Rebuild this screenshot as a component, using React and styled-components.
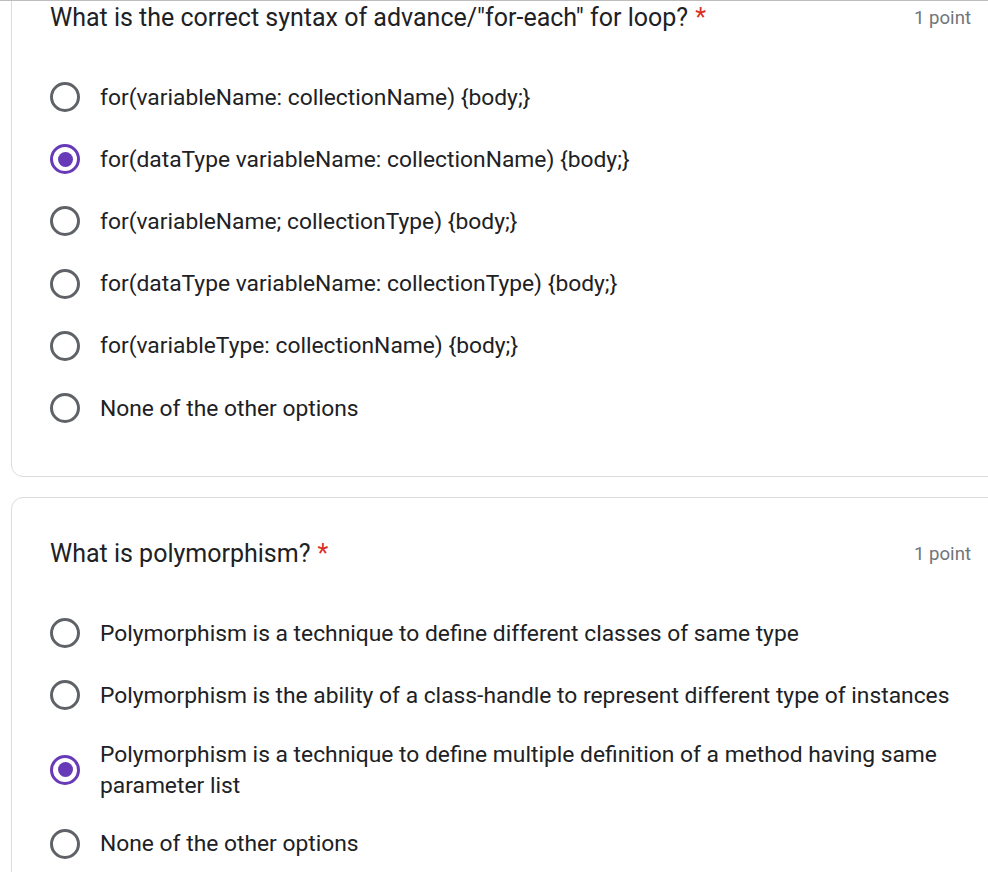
import React from 'react';
import styled, { createGlobalStyle } from 'styled-components';

const GlobalStyle = createGlobalStyle`
  html, body {
    margin: 0;
    padding: 0;
    background: #fff;
    overflow: hidden;
  }
  body {
    font-family: Roboto, "Liberation Sans", Arial, sans-serif;
    color: #202124;
  }
`;

const Page = styled.div`
  height: 872px;
  overflow: hidden;
  border-top: 1px solid #bdbdbd;
  box-sizing: border-box;
  padding-left: 11px;
`;

const Stack = styled.div`
  display: flex;
  flex-direction: column;
  gap: 20px;
  width: 999px;
  margin-top: -40px;
`;

const Card = styled.div`
  background: #fff;
  border: 1px solid #dadce0;
  border-radius: 12px;
  padding: 38px 38px 37px 38px;
`;

const Header = styled.div`
  display: flex;
  justify-content: space-between;
  align-items: center;
  margin-bottom: 30px;
`;

const Title = styled.div`
  font-size: 25px;
  line-height: 36px;
  font-weight: 400;
  color: #202124;
`;

const Required = styled.span`
  color: #d93025;
  margin-left: 7px;
`;

const Points = styled.div`
  font-size: 18.6px;
  line-height: 36px;
  color: #70757a;
  white-space: nowrap;
`;

const Options = styled.div`
  display: flex;
  flex-direction: column;
`;

const Option = styled.label`
  display: flex;
  align-items: center;
  gap: 20px;
  padding: 12.1px 0;
  cursor: pointer;
`;

const Radio = styled.span`
  flex: none;
  width: 30px;
  height: 30px;
  margin: 4px 0;
  box-sizing: border-box;
  border-radius: 50%;
  border: 3px solid ${(p) => (p.checked ? '#673ab7' : '#5f6368')};
  display: flex;
  align-items: center;
  justify-content: center;

  &::after {
    content: '';
    width: 15px;
    height: 15px;
    border-radius: 50%;
    background: #673ab7;
    display: ${(p) => (p.checked ? 'block' : 'none')};
  }
`;

const OptionText = styled.span`
  font-size: 22.8px;
  line-height: 31px;
  color: #202124;
`;

const questions = [
  {
    title: 'What is the correct syntax of advance/"for-each" for loop?',
    points: '1 point',
    selected: 1,
    options: [
      'for(variableName: collectionName) {body;}',
      'for(dataType variableName: collectionName) {body;}',
      'for(variableName; collectionType) {body;}',
      'for(dataType variableName: collectionType) {body;}',
      'for(variableType: collectionName) {body;}',
      'None of the other options',
    ],
  },
  {
    title: 'What is polymorphism?',
    points: '1 point',
    selected: 2,
    options: [
      'Polymorphism is a technique to define different classes of same type',
      'Polymorphism is the ability of a class-handle to represent different type of instances',
      'Polymorphism is a technique to define multiple definition of a method having same parameter list',
      'None of the other options',
    ],
  },
];

function Question({ q }) {
  return (
    <Card>
      <Header>
        <Title>
          {q.title}
          <Required>*</Required>
        </Title>
        <Points>{q.points}</Points>
      </Header>
      <Options>
        {q.options.map((text, i) => (
          <Option key={i}>
            <Radio checked={i === q.selected} />
            <OptionText>{text}</OptionText>
          </Option>
        ))}
      </Options>
    </Card>
  );
}

export default function App() {
  return (
    <>
      <GlobalStyle />
      <Page>
        <Stack>
          {questions.map((q, i) => (
            <Question key={i} q={q} />
          ))}
        </Stack>
      </Page>
    </>
  );
}
